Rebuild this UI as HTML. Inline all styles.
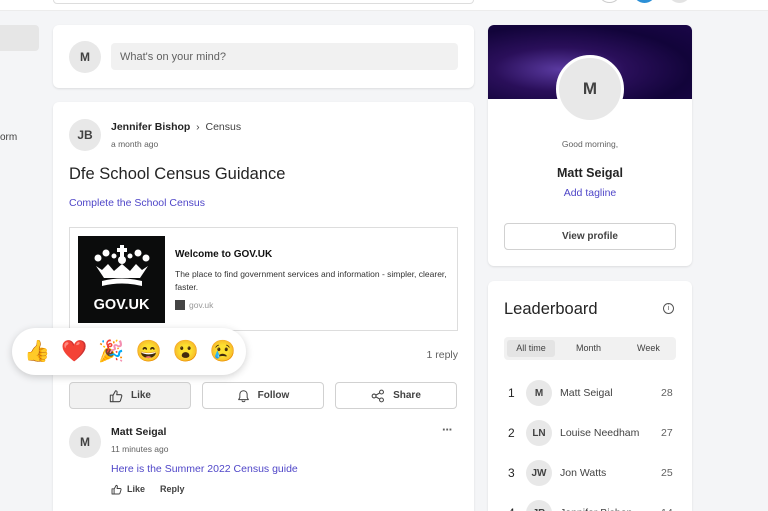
<!DOCTYPE html>
<html><head><style>
*{box-sizing:border-box;margin:0;padding:0}
html,body{width:768px;height:511px;overflow:hidden}
body{background:#f4f5f7;font-family:"Liberation Sans",sans-serif;color:#242424;position:relative}
.a{position:absolute}
.card{position:absolute;background:#fff;border-radius:6px;box-shadow:0 1px 2px rgba(0,0,0,.1)}
.av{position:absolute;border-radius:50%;background:#e8e8e8;display:flex;align-items:center;justify-content:center;color:#424242;font-weight:bold}
.btn{position:absolute;border:1px solid #d1d1d1;border-radius:4px;background:#fff;display:flex;align-items:center;justify-content:center;font-size:10px;font-weight:bold;color:#424242;gap:8px}
.lnk{color:#4f46c8}
svg{display:block}
</style></head><body>
<div class="a" style="left:0;top:0;width:768px;height:11px;background:#fff;border-bottom:1px solid #ececec"></div>
<div class="a" style="left:53px;top:-6px;width:421px;height:10px;background:#fff;border:1px solid #ddd;border-radius:4px"></div>
<div class="a" style="left:598px;top:-20px;width:23px;height:23px;border-radius:50%;border:1px solid #ccc;background:#fff"></div>
<div class="a" style="left:633px;top:-20px;width:23px;height:23px;border-radius:50%;background:#2b8fd6"></div>
<div class="a" style="left:668px;top:-20px;width:23px;height:23px;border-radius:50%;background:#e3e3e3"></div>

<div class="a" style="left:-5px;top:25px;width:44px;height:26px;background:#e6e6e6;border-radius:4px"></div>
<div class="a" style="left:0;top:132px;font-size:10px;color:#424242">orm</div>

<div class="card" style="left:53px;top:25px;width:421px;height:63px">
 <div class="av" style="left:16px;top:16px;width:32px;height:32px;font-size:12px">M</div>
 <div class="a" style="left:58px;top:18px;width:347px;height:27px;background:#f1f1f1;border-radius:4px;font-size:11px;color:#616161;padding:8px 9px">What's on your mind?</div>
</div>

<div class="card" style="left:53px;top:102px;width:421px;height:409px;border-radius:6px 6px 0 0;overflow:hidden">
 <div class="av" style="left:16px;top:17px;width:32px;height:32px;font-size:12px">JB</div>
 <div class="a" style="left:58px;top:19px;font-size:10.5px;font-weight:bold;color:#242424">Jennifer Bishop <span style="font-weight:normal;color:#424242">&nbsp;›&nbsp; Census</span></div>
 <div class="a" style="left:58px;top:37px;font-size:8.5px;color:#616161">a month ago</div>
 <div class="a" style="left:16px;top:63px;font-size:16.5px;color:#242424">Dfe School Census Guidance</div>
 <div class="a lnk" style="left:16px;top:95px;font-size:10.5px">Complete the School Census</div>
 <div class="a" style="left:16px;top:125px;width:389px;height:104px;border:1px solid #ddd">
  <div class="a" style="left:8px;top:8px;width:87px;height:87px;background:#0b0c0c;color:#fff">
   <svg class="a" style="left:14px;top:8px" width="60" height="46" viewBox="0 0 60 46" fill="#fff">
    <circle cx="6" cy="14" r="3.5"/><circle cx="14" cy="9" r="3.5"/><circle cx="46" cy="9" r="3.5"/><circle cx="54" cy="14" r="3.5"/><circle cx="22" cy="12" r="2.5"/><circle cx="38" cy="12" r="2.5"/>
    <rect x="28" y="1" width="4" height="12"/><rect x="25" y="4" width="10" height="4"/><circle cx="30" cy="16" r="4"/>
    <path d="M4 22 L12 34 L48 34 L56 22 L50 26 L44 20 L38 27 L30 20 L22 27 L16 20 L10 26 Z"/>
    <path d="M10 37 Q30 32 50 37 L50 42 Q30 37 10 42 Z"/>
   </svg>
   <div class="a" style="left:0;top:61px;width:87px;text-align:center;font-size:14.5px;font-weight:bold">GOV.UK</div>
  </div>
  <div class="a" style="left:105px;top:21px;font-size:10px;font-weight:bold;color:#111">Welcome to GOV.UK</div>
  <div class="a" style="left:105px;top:40px;width:275px;font-size:8.5px;line-height:13px;color:#333">The place to find government services and information - simpler, clearer, faster.</div>
  <div class="a" style="left:105px;top:72px;width:10px;height:10px;background:#444"></div>
  <div class="a" style="left:119px;top:72px;font-size:8.5px;color:#999">gov.uk</div>
 </div>
 <div class="a" style="right:16px;top:247px;font-size:10.5px;color:#616161">1 reply</div>
 <div class="btn" style="left:16px;top:280px;width:122px;height:27px;background:#f1f1f1">
  <svg width="14" height="14" viewBox="0 0 16 16" fill="none" stroke="#424242" stroke-width="1.2" stroke-linejoin="round"><path d="M1.5 7h3v7.5h-3zM4.5 7.5L7.5 2c1.5 0 2 1 1.7 2.5L8.8 6.5h4.5c1 0 1.6.9 1.3 1.8l-1.6 5.2c-.3.7-.8 1-1.5 1H4.5"/></svg>Like</div>
 <div class="btn" style="left:149px;top:280px;width:122px;height:27px">
  <svg width="13" height="14" viewBox="0 0 16 16" fill="none" stroke="#424242" stroke-width="1.2" stroke-linejoin="round"><path d="M8 1.5c-2.8 0-4.5 2-4.5 4.8v3.5L2 12.5h12l-1.5-2.7V6.3C12.5 3.5 10.8 1.5 8 1.5zM6 13.5c.3 1 1 1.5 2 1.5s1.7-.5 2-1.5"/></svg>Follow</div>
 <div class="btn" style="left:282px;top:280px;width:122px;height:27px">
  <svg width="14" height="14" viewBox="0 0 16 16" fill="none" stroke="#424242" stroke-width="1.2"><circle cx="3.5" cy="8" r="2.2"/><circle cx="12" cy="3.5" r="2.2"/><circle cx="12" cy="12.5" r="2.2"/><path d="M5.5 7l4.5-2.5M5.5 9l4.5 2.5"/></svg>Share</div>
 <div class="av" style="left:16px;top:324px;width:32px;height:32px;font-size:12px">M</div>
 <div class="a" style="left:58px;top:324px;font-size:10.5px;font-weight:bold">Matt Seigal</div>
 <div class="a" style="left:58px;top:342px;font-size:8.5px;color:#616161">11 minutes ago</div>
 <div class="a" style="right:22px;top:320px;font-size:13px;font-weight:bold;color:#616161;letter-spacing:-1px">···</div>
 <div class="a lnk" style="left:58px;top:361px;font-size:10.5px">Here is the Summer 2022 Census guide</div>
 <svg class="a" style="left:58px;top:382px" width="11" height="11" viewBox="0 0 16 16" fill="none" stroke="#424242" stroke-width="1.4" stroke-linejoin="round"><path d="M1.5 7h3v7.5h-3zM4.5 7.5L7.5 2c1.5 0 2 1 1.7 2.5L8.8 6.5h4.5c1 0 1.6.9 1.3 1.8l-1.6 5.2c-.3.7-.8 1-1.5 1H4.5"/></svg>
 <div class="a" style="left:74px;top:382px;font-size:9px;font-weight:bold;color:#424242">Like &nbsp;&nbsp;&nbsp;&nbsp; Reply</div>
</div>

<div class="a" style="left:12px;top:328px;width:234px;height:47px;background:#fff;border-radius:24px;box-shadow:0 2px 8px rgba(0,0,0,.18);font-size:21px;line-height:47px;padding-left:12px;letter-spacing:11px;white-space:nowrap">👍❤️🎉😄😮😢</div>

<div class="card" style="left:488px;top:25px;width:204px;height:241px;overflow:hidden">
 <div class="a" style="left:0;top:0;width:204px;height:74px;background:radial-gradient(ellipse at 35% 60%,#5a3aa0 0%,#2a0f5a 35%,#12043a 70%,#1a0648 100%)"></div>
 <div class="av" style="left:68px;top:30px;width:68px;height:68px;border:3px solid #fff;font-size:17px">M</div>
 <div class="a" style="left:0;top:114px;width:204px;text-align:center;font-size:8.5px;color:#616161">Good morning,</div>
 <div class="a" style="left:0;top:141px;width:204px;text-align:center;font-size:12.5px;font-weight:bold">Matt Seigal</div>
 <div class="a lnk" style="left:0;top:162px;width:204px;text-align:center;font-size:10.5px">Add tagline</div>
 <div class="btn" style="left:16px;top:198px;width:172px;height:27px">View profile</div>
</div>

<div class="card" style="left:488px;top:281px;width:204px;height:230px;border-radius:6px 6px 0 0;overflow:hidden">
 <div class="a" style="left:16px;top:19px;font-size:16.5px">Leaderboard</div>
 <div class="a" style="left:175px;top:22px;width:11px;height:11px;border:1px solid #555;border-radius:50%;font-size:7px;text-align:center;line-height:9px;color:#555">i</div>
 <div class="a" style="left:16px;top:56px;width:172px;height:23px;background:#f1f1f1;border-radius:4px;font-size:9px;color:#424242">
  <div class="a" style="left:3px;top:3px;width:48px;height:17px;background:#e4e4e4;border-radius:3px;text-align:center;line-height:17px">All time</div>
  <div class="a" style="left:72px;top:6px">Month</div>
  <div class="a" style="left:133px;top:6px">Week</div>
 </div>
 <div class="a" style="left:20px;top:105px;font-size:12px">1</div>
 <div class="av" style="left:38px;top:99px;width:26px;height:26px;font-size:10px">M</div>
 <div class="a" style="left:72px;top:106px;font-size:10.5px;color:#424242">Matt Seigal</div>
 <div class="a" style="left:173px;top:106px;font-size:10.5px;color:#616161">28</div>
 <div class="a" style="left:20px;top:145px;font-size:12px">2</div>
 <div class="av" style="left:38px;top:139px;width:26px;height:26px;font-size:10px">LN</div>
 <div class="a" style="left:72px;top:146px;font-size:10.5px;color:#424242">Louise Needham</div>
 <div class="a" style="left:173px;top:146px;font-size:10.5px;color:#616161">27</div>
 <div class="a" style="left:20px;top:185px;font-size:12px">3</div>
 <div class="av" style="left:38px;top:179px;width:26px;height:26px;font-size:10px">JW</div>
 <div class="a" style="left:72px;top:186px;font-size:10.5px;color:#424242">Jon Watts</div>
 <div class="a" style="left:173px;top:186px;font-size:10.5px;color:#616161">25</div>
 <div class="a" style="left:20px;top:225px;font-size:12px">4</div>
 <div class="av" style="left:38px;top:219px;width:26px;height:26px;font-size:10px">JB</div>
 <div class="a" style="left:72px;top:226px;font-size:10.5px;color:#424242">Jennifer Bishop</div>
 <div class="a" style="left:173px;top:226px;font-size:10.5px;color:#616161">14</div>
</div>
</body></html>
